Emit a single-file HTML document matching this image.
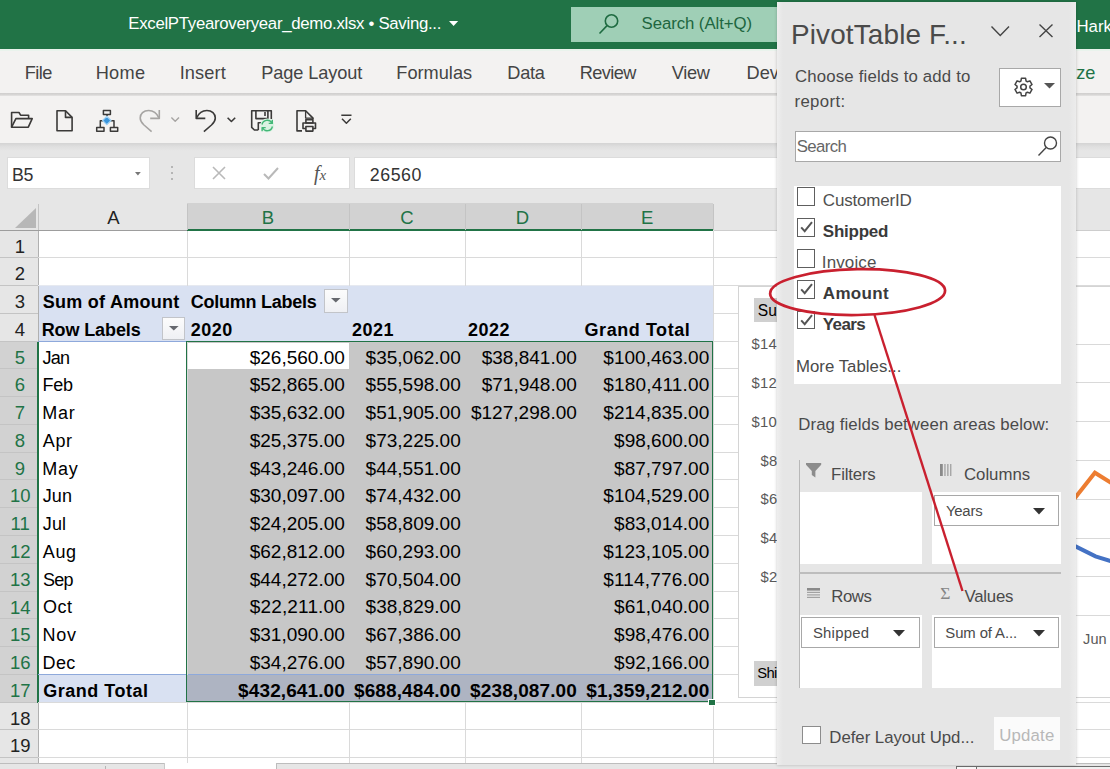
<!DOCTYPE html>
<html><head><meta charset="utf-8"><title>Excel PivotTable</title>
<style>
html,body{margin:0;padding:0;}
body{width:1110px;height:769px;position:relative;overflow:hidden;background:#e6e6e6;font-family:"Liberation Sans",sans-serif;color:#444;}
.a{position:absolute;white-space:nowrap;}
.t{position:absolute;white-space:nowrap;line-height:1;transform-origin:0 50%;}
.dd{position:absolute;border:1.3px solid #a8a8a8;background:#fff;box-sizing:border-box;}
svg{position:absolute;overflow:visible;}
</style></head><body>

<div class="a" style="left:0;top:0;width:1110px;height:49px;background:#217346;"></div>
<div class="t" id="title" style="left:128.30px;top:16px;font-size:16.8px;color:#fff;letter-spacing:-0.295px;">ExcelPTyearoveryear_demo.xlsx • Saving...</div>
<svg style="left:449.300px;top:21px" width="9.200" height="5"><path d="M0 0H9.200L4.600 5Z" fill="#fff"/></svg>
<div class="a" style="left:571px;top:7px;width:260px;height:34.5px;background:#9fcfb6;"></div>
<svg style="left:597px;top:12px" width="24" height="24" viewBox="0 0 24 24" fill="none" stroke="#1e6b41" stroke-width="1.6"><circle cx="14.5" cy="9" r="6.2"/><path d="M10 13.6L2.5 21.5"/></svg>
<div class="t" id="srch" style="left:641.50px;top:16px;font-size:16.8px;color:#20663f;letter-spacing:-0.066px;">Search (Alt+Q)</div>
<div class="t" id="hark" style="left:1076.50px;top:19px;font-size:16.8px;color:#fff;">Hark</div>
<div class="a" style="left:0;top:49px;width:1110px;height:44px;background:#f3f2f1;"></div>
<div class="a" style="left:0;top:49px;width:1110px;height:2px;background:#e9f3ec;"></div>
<div class="t" id="tab0" style="left:24.70px;top:64px;font-size:18.2px;color:#444;letter-spacing:-0.530px;">File</div>
<div class="t" id="tab1" style="left:95.70px;top:64px;font-size:18.2px;color:#444;letter-spacing:0.300px;">Home</div>
<div class="t" id="tab2" style="left:179.70px;top:64px;font-size:18.2px;color:#444;letter-spacing:0.113px;">Insert</div>
<div class="t" id="tab3" style="left:261.30px;top:64px;font-size:18.2px;color:#444;letter-spacing:-0.108px;">Page Layout</div>
<div class="t" id="tab4" style="left:396.30px;top:64px;font-size:18.2px;color:#444;letter-spacing:-0.000px;">Formulas</div>
<div class="t" id="tab5" style="left:507.30px;top:64px;font-size:18.2px;color:#444;letter-spacing:-0.301px;">Data</div>
<div class="t" id="tab6" style="left:579.70px;top:64px;font-size:18.2px;color:#444;letter-spacing:-0.580px;">Review</div>
<div class="t" id="tab7" style="left:671.70px;top:64px;font-size:18.2px;color:#444;letter-spacing:-0.319px;">View</div>
<div class="t" id="tab8" style="left:746.50px;top:64px;font-size:18.2px;color:#444;">Developer</div>
<div class="t" id="ze" style="left:-1.00px;top:64px;font-size:18.2px;color:#217346;left:auto;right:14.6px;">PivotTable Analyze</div>
<div class="a" style="left:0;top:92.6px;width:1110px;height:3.2px;background:linear-gradient(#cfcecd,#d9d8d7 70%,#e8e7e6);"></div>
<div class="a" style="left:0;top:95.6px;width:1110px;height:47px;background:#f3f2f1;"></div>
<div class="a" style="left:0;top:142.600px;width:1110px;height:8px;background:linear-gradient(#d3d3d3,#dfdfdf 45%,#e6e6e6);"></div>
<svg style="left:0;top:0" width="400" height="145" fill="none" stroke="#3b3a39" stroke-width="1.6" stroke-linejoin="round">
<path d="M11.6 127.2V112.5H19L20.6 115.2H28.6V118.5"/><path d="M11.6 127.2L15.9 118.6H32.2L28.3 127.2Z"/>
<path d="M57 110.8H65.5L72.1 117.4V130.8H57Z"/><path d="M65.5 110.8V117.4H72.1"/>
<g stroke-width="1.5"><rect x="103.4" y="110.6" width="7" height="3.8"/><rect x="96.7" y="127.4" width="7.3" height="3.8"/><rect x="110.4" y="127.4" width="7.3" height="3.8"/><path d="M100.3 127.4V120.8H114V127.4"/><path d="M107 114.4V116"/></g>
<path d="M106.8 116.3L111 120.5L106.8 124.7L102.600 120.5Z" fill="#3a96dd" stroke="#9fd0f3" stroke-width="1.2"/>
<g stroke="#a6a4a2" stroke-width="1.6"><path d="M159.3 110V118.4H150.2"/><path d="M158.8 117.8C157 113.600 153 110.5 148.6 110.5C143.600 110.5 140.2 113.800 140.2 118C140.2 121 141.8 123 144 125L151.6 131.6"/><path d="M171.4 117.5L175.2 121.2L179 117.5" stroke-width="1.4"/></g>
<path d="M196.2 110V118.4H205.3"/><path d="M196.7 117.8C198.5 113.600 202.5 110.5 206.9 110.5C211.9 110.5 215.3 113.800 215.3 118C215.3 121 213.7 123 211.5 125L203.9 131.6"/><path d="M227.6 117.7L231.4 121.5L235.2 117.700" stroke-width="1.6"/>
<path d="M258.3 130H254.4L251.7 127.4V110.7H271.3V119"/><path d="M255.9 110.7V118.6H267.900V110.7M265 112V116"/><path d="M258.3 130V122.8H261.5"/>
<circle cx="267.2" cy="125.5" r="7" fill="#d9f2e2" stroke="none"/>
<g stroke="#43b777" stroke-width="1.4"><path d="M262 124.500A5.300 5.300 0 0 1 271.8 123M272.3 119.800V123.400H268.700"/><path d="M272.4 126.500A5.300 5.300 0 0 1 262.600 128M262.100 131.200V127.600H265.700"/></g>
<path d="M302 130.900H297V110.700H305.6L313 118.100V119"/><path d="M305.6 110.700V118.100H313" stroke-width="1.3"/><rect x="305.900" y="119.600" width="7" height="3.400"/><rect x="303" y="123" width="12.500" height="5.500"/><rect x="305.900" y="126.500" width="7" height="4.600" fill="#f3f2f1"/>
<path d="M341.300 115.200H351.500M342 118.800L346.400 123.200L350.800 118.800" stroke-width="1.500"/>
</svg>
<div class="a" style="left:7px;top:157px;width:143px;height:32px;background:#fff;border:1px solid #dcdcdc;box-sizing:border-box;"></div>
<div class="t" id="b5" style="left:12.00px;top:167px;font-size:17.8px;color:#333;letter-spacing:-0.260px;">B5</div>
<svg style="left:134.600px;top:172.300px" width="5.800" height="3.400"><path d="M0 0H5.800L2.900 3.400Z" fill="#777"/></svg>
<div class="a" style="left:171px;top:166px;width:2px;height:2px;background:#b5b5b5;"></div>
<div class="a" style="left:171px;top:172px;width:2px;height:2px;background:#b5b5b5;"></div>
<div class="a" style="left:171px;top:178px;width:2px;height:2px;background:#b5b5b5;"></div>
<div class="a" style="left:194px;top:157px;width:155.500px;height:32px;background:#fff;border:1px solid #dcdcdc;box-sizing:border-box;"></div>
<svg style="left:212px;top:166px" width="14" height="14" fill="none" stroke="#b9b9b9" stroke-width="1.6"><path d="M1 1L13 13M13 1L1 13"/></svg>
<svg style="left:263px;top:167px" width="16" height="13" fill="none" stroke="#b9b9b9" stroke-width="2"><path d="M1 7L5.500 11.500L15 1"/></svg>
<div class="t" style="left:314px;top:163px;font-size:20px;color:#555;font-family:'Liberation Serif',serif;font-style:italic;">f<span style="font-size:15px">x</span></div>
<div class="a" style="left:354px;top:157px;width:760px;height:32px;background:#fff;border:1px solid #dcdcdc;box-sizing:border-box;"></div>
<div class="t" id="fval" style="left:369.70px;top:167px;font-size:17.8px;color:#333;letter-spacing:0.586px;">26560</div>
<div class="a" style="left:38px;top:230px;width:1072px;height:533px;background:#fff;"></div>
<div class="a" style="left:0;top:203px;width:1110px;height:27.500px;background:#e6e6e6;"></div>
<div class="a" style="left:186.5px;top:203px;width:526.5px;height:27px;background:#d2d2d2;border-bottom:2px solid #217346;box-sizing:content-box;height:26px;"></div>
<div class="a" style="left:0;top:230px;width:186.500px;height:1px;background:#9d9d9d;"></div>
<div class="a" style="left:713.5px;top:230px;width:400px;height:1px;background:#cdcdcd;"></div>
<svg style="left:15px;top:208px" width="21" height="20"><path d="M21 0V20H0Z" fill="#b7b7b7"/></svg>
<div class="a" style="left:38px;top:204px;width:1px;height:26px;background:#c4c4c4;"></div>
<div class="a" style="left:186.5px;top:204px;width:1px;height:26px;background:#c4c4c4;"></div>
<div class="a" style="left:348.5px;top:204px;width:1px;height:26px;background:#c4c4c4;"></div>
<div class="a" style="left:464.5px;top:204px;width:1px;height:26px;background:#c4c4c4;"></div>
<div class="a" style="left:580.5px;top:204px;width:1px;height:26px;background:#c4c4c4;"></div>
<div class="a" style="left:713px;top:204px;width:1px;height:26px;background:#c4c4c4;"></div>
<div class="t" id="chA" style="left:93.35px;width:40.0px;text-align:center;top:209px;font-size:18.5px;color:#222;">A</div>
<div class="t" id="chB" style="left:248px;width:40px;text-align:center;top:209px;font-size:18.5px;color:#217346;">B</div>
<div class="t" id="chC" style="left:386.95px;width:40.0px;text-align:center;top:209px;font-size:18.5px;color:#217346;">C</div>
<div class="t" id="chD" style="left:502.35px;width:40.0px;text-align:center;top:209px;font-size:18.5px;color:#217346;">D</div>
<div class="t" id="chE" style="left:627.15px;width:40.0px;text-align:center;top:209px;font-size:18.5px;color:#217346;">E</div>
<div class="a" style="left:0;top:230.60px;width:38px;height:27.77px;background:#e6e6e6;"></div>
<div class="a" style="left:0;top:257.37px;width:38px;height:1px;background:#c4c4c4;"></div>
<div class="t" id="rh1" style="left:0px;width:39.6px;text-align:center;top:238px;font-size:18.5px;color:#222;">1</div>
<div class="a" style="left:0;top:258.37px;width:38px;height:27.77px;background:#e6e6e6;"></div>
<div class="a" style="left:0;top:285.13px;width:38px;height:1px;background:#c4c4c4;"></div>
<div class="t" id="rh2" style="left:0px;width:39.6px;text-align:center;top:265px;font-size:18.5px;color:#222;">2</div>
<div class="a" style="left:0;top:286.13px;width:38px;height:27.77px;background:#e6e6e6;"></div>
<div class="a" style="left:0;top:312.89px;width:38px;height:1px;background:#c4c4c4;"></div>
<div class="t" id="rh3" style="left:0px;width:39.6px;text-align:center;top:293px;font-size:18.5px;color:#222;">3</div>
<div class="a" style="left:0;top:313.89px;width:38px;height:27.77px;background:#e6e6e6;"></div>
<div class="a" style="left:0;top:340.66px;width:38px;height:1px;background:#c4c4c4;"></div>
<div class="t" id="rh4" style="left:0px;width:39.6px;text-align:center;top:321px;font-size:18.5px;color:#222;">4</div>
<div class="a" style="left:0;top:341.66px;width:38px;height:27.77px;background:#d2d2d2;"></div>
<div class="a" style="left:0;top:368.42px;width:38px;height:1px;background:#c4c4c4;"></div>
<div class="t" id="rh5" style="left:0px;width:39.6px;text-align:center;top:349px;font-size:18.5px;color:#217346;">5</div>
<div class="a" style="left:0;top:369.42px;width:38px;height:27.77px;background:#d2d2d2;"></div>
<div class="a" style="left:0;top:396.19px;width:38px;height:1px;background:#c4c4c4;"></div>
<div class="t" id="rh6" style="left:0px;width:39.6px;text-align:center;top:376px;font-size:18.5px;color:#217346;">6</div>
<div class="a" style="left:0;top:397.19px;width:38px;height:27.77px;background:#d2d2d2;"></div>
<div class="a" style="left:0;top:423.95px;width:38px;height:1px;background:#c4c4c4;"></div>
<div class="t" id="rh7" style="left:0px;width:39.6px;text-align:center;top:404px;font-size:18.5px;color:#217346;">7</div>
<div class="a" style="left:0;top:424.96px;width:38px;height:27.77px;background:#d2d2d2;"></div>
<div class="a" style="left:0;top:451.72px;width:38px;height:1px;background:#c4c4c4;"></div>
<div class="t" id="rh8" style="left:0px;width:39.6px;text-align:center;top:432px;font-size:18.5px;color:#217346;">8</div>
<div class="a" style="left:0;top:452.72px;width:38px;height:27.77px;background:#d2d2d2;"></div>
<div class="a" style="left:0;top:479.49px;width:38px;height:1px;background:#c4c4c4;"></div>
<div class="t" id="rh9" style="left:0px;width:39.6px;text-align:center;top:460px;font-size:18.5px;color:#217346;">9</div>
<div class="a" style="left:0;top:480.49px;width:38px;height:27.77px;background:#d2d2d2;"></div>
<div class="a" style="left:0;top:507.25px;width:38px;height:1px;background:#c4c4c4;"></div>
<div class="t" id="rh10" style="left:0px;width:40.4px;text-align:center;top:487px;font-size:18.5px;color:#217346;">10</div>
<div class="a" style="left:0;top:508.25px;width:38px;height:27.77px;background:#d2d2d2;"></div>
<div class="a" style="left:0;top:535.01px;width:38px;height:1px;background:#c4c4c4;"></div>
<div class="t" id="rh11" style="left:0px;width:40.4px;text-align:center;top:515px;font-size:18.5px;color:#217346;">11</div>
<div class="a" style="left:0;top:536.01px;width:38px;height:27.77px;background:#d2d2d2;"></div>
<div class="a" style="left:0;top:562.78px;width:38px;height:1px;background:#c4c4c4;"></div>
<div class="t" id="rh12" style="left:0px;width:40.4px;text-align:center;top:543px;font-size:18.5px;color:#217346;">12</div>
<div class="a" style="left:0;top:563.78px;width:38px;height:27.77px;background:#d2d2d2;"></div>
<div class="a" style="left:0;top:590.54px;width:38px;height:1px;background:#c4c4c4;"></div>
<div class="t" id="rh13" style="left:0px;width:40.4px;text-align:center;top:571px;font-size:18.5px;color:#217346;">13</div>
<div class="a" style="left:0;top:591.54px;width:38px;height:27.77px;background:#d2d2d2;"></div>
<div class="a" style="left:0;top:618.31px;width:38px;height:1px;background:#c4c4c4;"></div>
<div class="t" id="rh14" style="left:0px;width:40.4px;text-align:center;top:599px;font-size:18.5px;color:#217346;">14</div>
<div class="a" style="left:0;top:619.31px;width:38px;height:27.77px;background:#d2d2d2;"></div>
<div class="a" style="left:0;top:646.08px;width:38px;height:1px;background:#c4c4c4;"></div>
<div class="t" id="rh15" style="left:0px;width:40.4px;text-align:center;top:626px;font-size:18.5px;color:#217346;">15</div>
<div class="a" style="left:0;top:647.08px;width:38px;height:27.77px;background:#d2d2d2;"></div>
<div class="a" style="left:0;top:673.84px;width:38px;height:1px;background:#c4c4c4;"></div>
<div class="t" id="rh16" style="left:0px;width:40.4px;text-align:center;top:654px;font-size:18.5px;color:#217346;">16</div>
<div class="a" style="left:0;top:674.84px;width:38px;height:27.77px;background:#d2d2d2;"></div>
<div class="a" style="left:0;top:701.61px;width:38px;height:1px;background:#c4c4c4;"></div>
<div class="t" id="rh17" style="left:0px;width:40.4px;text-align:center;top:682px;font-size:18.5px;color:#217346;">17</div>
<div class="a" style="left:0;top:702.61px;width:38px;height:27.77px;background:#e6e6e6;"></div>
<div class="a" style="left:0;top:729.37px;width:38px;height:1px;background:#c4c4c4;"></div>
<div class="t" id="rh18" style="left:0px;width:40.4px;text-align:center;top:710px;font-size:18.5px;color:#222;">18</div>
<div class="a" style="left:0;top:730.37px;width:38px;height:27.77px;background:#e6e6e6;"></div>
<div class="a" style="left:0;top:757.13px;width:38px;height:1px;background:#c4c4c4;"></div>
<div class="t" id="rh19" style="left:0px;width:40.4px;text-align:center;top:737px;font-size:18.5px;color:#222;">19</div>
<div class="a" style="left:0;top:758.13px;width:38px;height:5px;background:#e6e6e6;"></div>
<div class="a" style="left:37.500px;top:231px;width:1px;height:532px;background:#b0b0b0;"></div>
<div class="a" style="left:37px;top:341.66px;width:2px;height:360.94px;background:#217346;"></div>
<div class="a" style="left:38.500px;top:286.13px;width:674.5px;height:55.53px;background:#d9e1f2;"></div>
<div class="a" style="left:38.500px;top:674.84px;width:148.0px;height:27.77px;background:#d9e1f2;"></div>
<div class="a" style="left:186.5px;top:341.66px;width:526.5px;height:333.18px;background:#c7c7c7;"></div>
<div class="a" style="left:186.5px;top:674.84px;width:526.5px;height:27.77px;background:#aeb4c2;"></div>
<div class="a" style="left:187.5px;top:342.66px;width:161.0px;height:26.77px;background:#fff;"></div>
<div class="a" style="left:38px;top:257.37px;width:1072px;height:1px;background:#dadada;"></div>
<div class="a" style="left:38px;top:285.13px;width:675px;height:1px;background:#e6e9f0;"></div>
<div class="a" style="left:713px;top:285.13px;width:397px;height:1px;background:#dadada;"></div>
<div class="a" style="left:713px;top:312.89px;width:397px;height:1px;background:#dadada;"></div>
<div class="a" style="left:38px;top:340.66px;width:148px;height:1px;background:#8ea9db;"></div>
<div class="a" style="left:713px;top:340.66px;width:397px;height:1px;background:#dadada;"></div>
<div class="a" style="left:713px;top:368.42px;width:397px;height:1px;background:#dadada;"></div>
<div class="a" style="left:713px;top:396.19px;width:397px;height:1px;background:#dadada;"></div>
<div class="a" style="left:713px;top:423.96px;width:397px;height:1px;background:#dadada;"></div>
<div class="a" style="left:713px;top:451.72px;width:397px;height:1px;background:#dadada;"></div>
<div class="a" style="left:713px;top:479.49px;width:397px;height:1px;background:#dadada;"></div>
<div class="a" style="left:713px;top:507.25px;width:397px;height:1px;background:#dadada;"></div>
<div class="a" style="left:713px;top:535.01px;width:397px;height:1px;background:#dadada;"></div>
<div class="a" style="left:713px;top:562.78px;width:397px;height:1px;background:#dadada;"></div>
<div class="a" style="left:713px;top:590.54px;width:397px;height:1px;background:#dadada;"></div>
<div class="a" style="left:713px;top:618.31px;width:397px;height:1px;background:#dadada;"></div>
<div class="a" style="left:713px;top:646.08px;width:397px;height:1px;background:#dadada;"></div>
<div class="a" style="left:38px;top:673.84px;width:675px;height:1px;background:#8ea9db;"></div>
<div class="a" style="left:713px;top:673.84px;width:397px;height:1px;background:#dadada;"></div>
<div class="a" style="left:38px;top:701.61px;width:1072px;height:1px;background:#dadada;"></div>
<div class="a" style="left:38px;top:729.37px;width:1072px;height:1px;background:#dadada;"></div>
<div class="a" style="left:38px;top:757.13px;width:1072px;height:1px;background:#dadada;"></div>
<div class="a" style="left:186.5px;top:231.00px;width:1px;height:55.13px;background:#dadada;"></div>
<div class="a" style="left:186.5px;top:702.61px;width:1px;height:60.39px;background:#dadada;"></div>
<div class="a" style="left:186.5px;top:341.66px;width:1px;height:333.18px;background:#dadada;"></div>
<div class="a" style="left:348.5px;top:231.00px;width:1px;height:55.13px;background:#dadada;"></div>
<div class="a" style="left:348.5px;top:702.61px;width:1px;height:60.39px;background:#dadada;"></div>
<div class="a" style="left:464.5px;top:231.00px;width:1px;height:55.13px;background:#dadada;"></div>
<div class="a" style="left:464.5px;top:702.61px;width:1px;height:60.39px;background:#dadada;"></div>
<div class="a" style="left:580.5px;top:231.00px;width:1px;height:55.13px;background:#dadada;"></div>
<div class="a" style="left:580.5px;top:702.61px;width:1px;height:60.39px;background:#dadada;"></div>
<div class="a" style="left:713px;top:231.00px;width:1px;height:55.13px;background:#dadada;"></div>
<div class="a" style="left:713px;top:702.61px;width:1px;height:60.39px;background:#dadada;"></div>
<div class="a" style="left:713px;top:231.00px;width:1px;height:532.00px;background:#dadada;"></div>
<div class="a" style="left:186.0px;top:340.66px;width:526.5px;height:360.94px;border:1.500px solid #217346;box-sizing:border-box;"></div>
<div class="a" style="left:708.2px;top:698.8px;width:5.6px;height:5.2px;background:#217346;border:1px solid #fff;"></div>
<div class="t" id="c1" style="left:42.70px;top:293px;font-size:18.0px;color:#000;font-weight:bold;letter-spacing:0.276px;">Sum of Amount</div>
<div class="t" id="c2" style="left:190.70px;top:293px;font-size:18.0px;color:#000;font-weight:bold;letter-spacing:-0.250px;">Column Labels</div>
<div class="t" id="c3" style="left:41.70px;top:321px;font-size:18.0px;color:#000;font-weight:bold;letter-spacing:-0.112px;">Row Labels</div>
<div class="t" id="c4" style="left:190.70px;top:321px;font-size:18.0px;color:#000;font-weight:bold;letter-spacing:0.523px;">2020</div>
<div class="t" id="c5" style="left:351.90px;top:321px;font-size:18.0px;color:#000;font-weight:bold;letter-spacing:0.523px;">2021</div>
<div class="t" id="c6" style="left:468.00px;top:321px;font-size:18.0px;color:#000;font-weight:bold;letter-spacing:0.523px;">2022</div>
<div class="t" id="c7" style="left:584.50px;top:321px;font-size:18.0px;color:#000;font-weight:bold;letter-spacing:0.563px;">Grand Total</div>
<div class="t" id="c8" style="left:42.40px;top:349px;font-size:18.0px;color:#000;letter-spacing:-0.700px;">Jan</div>
<div class="t" id="c9" style="left:249.70px;top:348px;font-size:19.0px;color:#000;letter-spacing:0.008px;">$26,560.00</div>
<div class="t" id="c10" style="left:365.60px;top:348px;font-size:19.0px;color:#000;letter-spacing:0.008px;">$35,062.00</div>
<div class="t" id="c11" style="left:481.70px;top:348px;font-size:19.0px;color:#000;letter-spacing:0.008px;">$38,841.00</div>
<div class="t" id="c12" style="left:603.30px;top:348px;font-size:19.0px;color:#000;letter-spacing:0.031px;">$100,463.00</div>
<div class="t" id="c13" style="left:42.60px;top:376px;font-size:18.0px;color:#000;letter-spacing:-0.253px;">Feb</div>
<div class="t" id="c14" style="left:249.70px;top:375px;font-size:19.0px;color:#000;letter-spacing:0.008px;">$52,865.00</div>
<div class="t" id="c15" style="left:365.60px;top:375px;font-size:19.0px;color:#000;letter-spacing:0.008px;">$55,598.00</div>
<div class="t" id="c16" style="left:481.70px;top:375px;font-size:19.0px;color:#000;letter-spacing:0.008px;">$71,948.00</div>
<div class="t" id="c17" style="left:603.30px;top:375px;font-size:19.0px;color:#000;letter-spacing:0.172px;">$180,411.00</div>
<div class="t" id="c18" style="left:42.30px;top:404px;font-size:18.0px;color:#000;letter-spacing:0.700px;">Mar</div>
<div class="t" id="c19" style="left:249.70px;top:403px;font-size:19.0px;color:#000;letter-spacing:0.008px;">$35,632.00</div>
<div class="t" id="c20" style="left:365.60px;top:403px;font-size:19.0px;color:#000;letter-spacing:0.008px;">$51,905.00</div>
<div class="t" id="c21" style="left:470.90px;top:403px;font-size:19.0px;color:#000;letter-spacing:0.031px;">$127,298.00</div>
<div class="t" id="c22" style="left:603.30px;top:403px;font-size:19.0px;color:#000;letter-spacing:0.031px;">$214,835.00</div>
<div class="t" id="c23" style="left:42.70px;top:432px;font-size:18.0px;color:#000;letter-spacing:0.700px;">Apr</div>
<div class="t" id="c24" style="left:249.70px;top:431px;font-size:19.0px;color:#000;letter-spacing:0.008px;">$25,375.00</div>
<div class="t" id="c25" style="left:365.60px;top:431px;font-size:19.0px;color:#000;letter-spacing:0.008px;">$73,225.00</div>
<div class="t" id="c26" style="left:614.10px;top:431px;font-size:19.0px;color:#000;letter-spacing:0.008px;">$98,600.00</div>
<div class="t" id="c27" style="left:42.30px;top:460px;font-size:18.0px;color:#000;letter-spacing:0.700px;">May</div>
<div class="t" id="c28" style="left:249.70px;top:459px;font-size:19.0px;color:#000;letter-spacing:0.008px;">$43,246.00</div>
<div class="t" id="c29" style="left:365.60px;top:459px;font-size:19.0px;color:#000;letter-spacing:0.008px;">$44,551.00</div>
<div class="t" id="c30" style="left:614.10px;top:459px;font-size:19.0px;color:#000;letter-spacing:0.008px;">$87,797.00</div>
<div class="t" id="c31" style="left:42.70px;top:487px;font-size:18.0px;color:#000;letter-spacing:0.095px;">Jun</div>
<div class="t" id="c32" style="left:249.70px;top:486px;font-size:19.0px;color:#000;letter-spacing:0.008px;">$30,097.00</div>
<div class="t" id="c33" style="left:365.60px;top:486px;font-size:19.0px;color:#000;letter-spacing:0.008px;">$74,432.00</div>
<div class="t" id="c34" style="left:603.30px;top:486px;font-size:19.0px;color:#000;letter-spacing:0.031px;">$104,529.00</div>
<div class="t" id="c35" style="left:42.70px;top:515px;font-size:18.0px;color:#000;letter-spacing:0.195px;">Jul</div>
<div class="t" id="c36" style="left:249.70px;top:514px;font-size:19.0px;color:#000;letter-spacing:0.008px;">$24,205.00</div>
<div class="t" id="c37" style="left:365.60px;top:514px;font-size:19.0px;color:#000;letter-spacing:0.008px;">$58,809.00</div>
<div class="t" id="c38" style="left:614.10px;top:514px;font-size:19.0px;color:#000;letter-spacing:0.008px;">$83,014.00</div>
<div class="t" id="c39" style="left:42.70px;top:543px;font-size:18.0px;color:#000;letter-spacing:0.700px;">Aug</div>
<div class="t" id="c40" style="left:249.70px;top:542px;font-size:19.0px;color:#000;letter-spacing:0.008px;">$62,812.00</div>
<div class="t" id="c41" style="left:365.60px;top:542px;font-size:19.0px;color:#000;letter-spacing:0.008px;">$60,293.00</div>
<div class="t" id="c42" style="left:603.30px;top:542px;font-size:19.0px;color:#000;letter-spacing:0.031px;">$123,105.00</div>
<div class="t" id="c43" style="left:43.00px;top:571px;font-size:18.0px;color:#000;letter-spacing:-0.700px;">Sep</div>
<div class="t" id="c44" style="left:249.70px;top:570px;font-size:19.0px;color:#000;letter-spacing:0.008px;">$44,272.00</div>
<div class="t" id="c45" style="left:365.60px;top:570px;font-size:19.0px;color:#000;letter-spacing:0.008px;">$70,504.00</div>
<div class="t" id="c46" style="left:603.30px;top:570px;font-size:19.0px;color:#000;letter-spacing:0.172px;">$114,776.00</div>
<div class="t" id="c47" style="left:42.90px;top:598px;font-size:18.0px;color:#000;letter-spacing:0.500px;">Oct</div>
<div class="t" id="c48" style="left:249.70px;top:597px;font-size:19.0px;color:#000;letter-spacing:0.165px;">$22,211.00</div>
<div class="t" id="c49" style="left:365.60px;top:597px;font-size:19.0px;color:#000;letter-spacing:0.008px;">$38,829.00</div>
<div class="t" id="c50" style="left:614.10px;top:597px;font-size:19.0px;color:#000;letter-spacing:0.008px;">$61,040.00</div>
<div class="t" id="c51" style="left:42.60px;top:626px;font-size:18.0px;color:#000;letter-spacing:0.700px;">Nov</div>
<div class="t" id="c52" style="left:249.70px;top:625px;font-size:19.0px;color:#000;letter-spacing:0.008px;">$31,090.00</div>
<div class="t" id="c53" style="left:365.60px;top:625px;font-size:19.0px;color:#000;letter-spacing:0.008px;">$67,386.00</div>
<div class="t" id="c54" style="left:614.10px;top:625px;font-size:19.0px;color:#000;letter-spacing:0.008px;">$98,476.00</div>
<div class="t" id="c55" style="left:42.60px;top:654px;font-size:18.0px;color:#000;letter-spacing:0.295px;">Dec</div>
<div class="t" id="c56" style="left:249.70px;top:653px;font-size:19.0px;color:#000;letter-spacing:0.008px;">$34,276.00</div>
<div class="t" id="c57" style="left:365.60px;top:653px;font-size:19.0px;color:#000;letter-spacing:0.008px;">$57,890.00</div>
<div class="t" id="c58" style="left:614.10px;top:653px;font-size:19.0px;color:#000;letter-spacing:0.008px;">$92,166.00</div>
<div class="t" id="c59" style="left:43.20px;top:682px;font-size:18.0px;color:#000;font-weight:bold;letter-spacing:0.513px;">Grand Total</div>
<div class="t" id="c60" style="left:238.10px;top:681px;font-size:19.0px;color:#000;font-weight:bold;letter-spacing:0.111px;">$432,641.00</div>
<div class="t" id="c61" style="left:354.00px;top:681px;font-size:19.0px;color:#000;font-weight:bold;letter-spacing:0.111px;">$688,484.00</div>
<div class="t" id="c62" style="left:470.10px;top:681px;font-size:19.0px;color:#000;font-weight:bold;letter-spacing:0.111px;">$238,087.00</div>
<div class="t" id="c63" style="left:586.20px;top:681px;font-size:19.0px;color:#000;font-weight:bold;letter-spacing:0.130px;">$1,359,212.00</div>
<div class="a" style="left:324.3px;top:289.03px;width:23.3px;height:23.6px;box-sizing:border-box;border:1px solid #c2c4c9;background:linear-gradient(#fcfcfc,#eff0f4);"></div>
<svg style="left:331.3px;top:298.43px" width="9.600" height="4.600"><path d="M0 0H9.600L4.800 4.600Z" fill="#66686e"/></svg>
<div class="a" style="left:162px;top:316.79px;width:23.3px;height:23.6px;box-sizing:border-box;border:1px solid #c2c4c9;background:linear-gradient(#fcfcfc,#eff0f4);"></div>
<svg style="left:169px;top:326.19px" width="9.600" height="4.600"><path d="M0 0H9.600L4.800 4.600Z" fill="#66686e"/></svg>
<div class="a" style="left:0;top:763.5px;width:1110px;height:6px;background:#e6e6e6;"></div>
<div class="a" style="left:0;top:763px;width:164.3px;height:1px;background:#bdbdbd;"></div>
<div class="a" style="left:164.3px;top:763px;width:112px;height:6px;background:#fff;"></div>
<div class="a" style="left:276.2px;top:763px;width:834px;height:1px;background:#bdbdbd;"></div>
<div class="a" style="left:276.2px;top:763px;width:1px;height:6px;background:#bdbdbd;"></div>
<div class="a" style="left:164.3px;top:763px;width:1px;height:6px;background:#c9c9c9;"></div>
<div class="a" style="left:104.5px;top:765.5px;width:1px;height:4px;background:#b5b5b5;"></div>
<div class="a" style="left:955.5px;top:765.5px;width:21px;height:5px;background:#f8f8f8;border:1.3px solid #6e6e6e;border-bottom:none;box-sizing:border-box;"></div>
<div class="a" style="left:977px;top:766px;width:133px;height:3px;background:#f0f0f0;border-top:1.3px solid #6e6e6e;box-sizing:border-box;"></div>
<div class="a" style="left:738px;top:285.6px;width:380px;height:412.4px;background:#fff;border:1px solid #d4d4d4;box-sizing:border-box;"></div>
<div class="a" style="left:754.2px;top:298.1px;width:60px;height:24px;background:#d0d0d0;"></div>
<div class="t" id="cht1" style="left:757.80px;top:303px;font-size:15.6px;color:#000;">Sum of Amount</div>
<div class="t" id="ax0" style="left:751.60px;top:337px;font-size:14.8px;color:#595959;letter-spacing:0.216px;">$140,000</div>
<div class="t" id="ax1" style="left:751.60px;top:376px;font-size:14.8px;color:#595959;letter-spacing:0.216px;">$120,000</div>
<div class="t" id="ax2" style="left:751.60px;top:415px;font-size:14.8px;color:#595959;letter-spacing:0.216px;">$100,000</div>
<div class="t" id="ax3" style="left:760.60px;top:454px;font-size:14.8px;color:#595959;letter-spacing:0.190px;">$80,000</div>
<div class="t" id="ax4" style="left:760.60px;top:492px;font-size:14.8px;color:#595959;letter-spacing:0.190px;">$60,000</div>
<div class="t" id="ax5" style="left:760.60px;top:531px;font-size:14.8px;color:#595959;letter-spacing:0.190px;">$40,000</div>
<div class="t" id="ax6" style="left:760.60px;top:570px;font-size:14.8px;color:#595959;letter-spacing:0.190px;">$20,000</div>
<div class="a" style="left:754.2px;top:661px;width:60px;height:24.5px;background:#d0d0d0;"></div>
<div class="t" id="cht2" style="left:757.30px;top:666px;font-size:14.8px;color:#000;letter-spacing:-0.700px;">Shipped</div>
<div class="a" style="left:1075px;top:343.70px;width:40px;height:1px;background:#d9d9d9;"></div>
<div class="a" style="left:1075px;top:382.46px;width:40px;height:1px;background:#d9d9d9;"></div>
<div class="a" style="left:1075px;top:421.22px;width:40px;height:1px;background:#d9d9d9;"></div>
<div class="a" style="left:1075px;top:459.98px;width:40px;height:1px;background:#d9d9d9;"></div>
<div class="a" style="left:1075px;top:498.74px;width:40px;height:1px;background:#d9d9d9;"></div>
<div class="a" style="left:1075px;top:537.50px;width:40px;height:1px;background:#d9d9d9;"></div>
<div class="a" style="left:1075px;top:576.26px;width:40px;height:1px;background:#d9d9d9;"></div>
<div class="a" style="left:1075px;top:615.02px;width:40px;height:1px;background:#d9d9d9;"></div>
<svg style="left:0;top:0" width="1110" height="769" fill="none" stroke-width="4" stroke-linejoin="miter"><path d="M1070 504.3L1094.9 472.7L1112 483.5" stroke="#ed7d31"/><path d="M1070 543.6L1095.5 556.4L1112 561.4" stroke="#4472c4"/></svg>
<div class="t" id="jun" style="left:1083.00px;top:632px;font-size:14.5px;color:#595959;letter-spacing:0.143px;">Jun</div>
<div class="a" style="left:776.5px;top:1.5px;width:299px;height:763px;background:linear-gradient(90deg,#eeeeee 0,#e6e6e6 6px,#e6e6e6 292px,#ececec 299px);box-sizing:border-box;box-shadow:0 0 3px rgba(0,0,0,0.22);"></div>
<div class="t" id="ptitle" style="left:791.00px;top:21px;font-size:27.9px;color:#4a4a4a;letter-spacing:0.152px;">PivotTable F...</div>
<svg style="left:991px;top:26px" width="18.5" height="10.5" viewBox="0 0 18.5 10.5" fill="none" stroke="#444" stroke-width="1.4"><path d="M0.5 0.5L9.25 9.5L18 0.5"/></svg>
<svg style="left:1039px;top:24px" width="14" height="13.4" viewBox="0 0 14 13.4" fill="none" stroke="#444" stroke-width="1.4"><path d="M0.5 0.5L13.5 12.9M13.5 0.5L0.5 12.9"/></svg>
<div class="t" id="choose1" style="left:795.00px;top:69px;font-size:16.8px;color:#4a4a4a;letter-spacing:0.167px;">Choose fields to add to</div>
<div class="t" id="choose2" style="left:794.50px;top:94px;font-size:16.8px;color:#4a4a4a;letter-spacing:0.344px;">report:</div>
<div class="dd" style="left:999px;top:67.5px;width:61.5px;height:39px;"></div>
<svg style="left:1013.5px;top:78px" width="19" height="18" viewBox="0 0 19 18" fill="none" stroke="#444" stroke-width="1.5" stroke-linejoin="round"><path d="M11.62 17.64 L7.38 17.64 L6.97 14.99 L5.58 14.19 L3.07 15.15 L0.96 11.49 L3.05 9.80 L3.05 8.20 L0.96 6.51 L3.07 2.85 L5.58 3.81 L6.97 3.01 L7.38 0.36 L11.62 0.36 L12.03 3.01 L13.42 3.81 L15.93 2.85 L18.04 6.51 L15.95 8.20 L15.95 9.80 L18.04 11.49 L15.93 15.15 L13.42 14.19 L12.03 14.99Z"/><circle cx="9.5" cy="9" r="2.800"/></svg>
<svg style="left:1044px;top:83.3px" width="11" height="5.6"><path d="M0 0H11L5.5 5.6Z" fill="#555"/></svg>
<div class="dd" style="left:794.5px;top:131px;width:266px;height:31px;"></div>
<div class="t" id="psearch" style="left:796.80px;top:139px;font-size:16.8px;color:#666;letter-spacing:-0.648px;">Search</div>
<svg style="left:1037px;top:135px" width="22" height="22" viewBox="0 0 22 22" fill="none" stroke="#444" stroke-width="1.4"><circle cx="13.5" cy="8" r="6"/><path d="M9.2 12.5L1.5 20.5"/></svg>
<div class="a" style="left:794px;top:186px;width:267px;height:197.5px;background:#fff;"></div>
<div class="a" style="left:796.5px;top:187.00px;width:18.8px;height:18.7px;box-sizing:border-box;border:1.3px solid #5e5e5e;background:#fff;"></div>
<div class="t" id="fld0" style="left:822.80px;top:192px;font-size:17px;color:#505050;letter-spacing:-0.179px;">CustomerID</div>
<div class="a" style="left:796.5px;top:217.95px;width:18.8px;height:18.7px;box-sizing:border-box;border:1.3px solid #5e5e5e;background:#fff;"></div>
<svg style="left:799.5px;top:221.15px" width="13" height="12" fill="none" stroke="#555" stroke-width="2"><path d="M1.2 6.400L4.700 10.200L12 1.200"/></svg>
<div class="t" id="fld1" style="left:822.80px;top:223px;font-size:17px;color:#3a3a3a;font-weight:bold;letter-spacing:-0.245px;">Shipped</div>
<div class="a" style="left:796.5px;top:248.90px;width:18.8px;height:18.7px;box-sizing:border-box;border:1.3px solid #5e5e5e;background:#fff;"></div>
<div class="t" id="fld2" style="left:821.80px;top:254px;font-size:17px;color:#505050;letter-spacing:0.132px;">Invoice</div>
<div class="a" style="left:796.5px;top:279.85px;width:18.8px;height:18.7px;box-sizing:border-box;border:1.3px solid #5e5e5e;background:#fff;"></div>
<svg style="left:799.5px;top:283.05px" width="13" height="12" fill="none" stroke="#555" stroke-width="2"><path d="M1.2 6.400L4.700 10.200L12 1.200"/></svg>
<div class="t" id="fld3" style="left:822.80px;top:285px;font-size:17px;color:#3a3a3a;font-weight:bold;letter-spacing:0.331px;">Amount</div>
<div class="a" style="left:796.5px;top:310.80px;width:18.8px;height:18.7px;box-sizing:border-box;border:1.3px solid #5e5e5e;background:#fff;"></div>
<svg style="left:799.5px;top:314.00px" width="13" height="12" fill="none" stroke="#555" stroke-width="2"><path d="M1.2 6.400L4.700 10.200L12 1.200"/></svg>
<div class="t" id="fld4" style="left:822.80px;top:316px;font-size:17px;color:#3a3a3a;font-weight:bold;letter-spacing:-0.606px;">Years</div>
<div class="t" id="more" style="left:796.00px;top:359px;font-size:16.8px;color:#4a4a4a;letter-spacing:0.021px;">More Tables...</div>
<div class="t" id="drag" style="left:798.30px;top:417px;font-size:16.8px;color:#4a4a4a;letter-spacing:0.091px;">Drag fields between areas below:</div>
<div class="a" style="left:798.6px;top:460px;width:1.2px;height:228px;background:#b8b8b8;"></div>
<div class="a" style="left:799px;top:572.3px;width:262px;height:1.4px;background:#bdbdbd;"></div>
<svg style="left:805.6px;top:463px" width="15.2" height="14.5" viewBox="0 0 15.2 14.5"><path d="M0 0H15.2V1.8L9.4 8V14.5L5.8 12V8L0 1.8Z" fill="#8c8c8c"/></svg>
<div class="t" id="lf" style="left:831.10px;top:467px;font-size:16.8px;color:#4a4a4a;letter-spacing:-0.182px;">Filters</div>
<div class="a" style="left:800px;top:492px;width:121.6px;height:71.8px;background:#fff;"></div>
<svg style="left:940px;top:464px" width="11.5" height="12" fill="#8a8a8a"><rect x="0" y="0" width="2.8" height="12"/><rect x="4.3" y="0" width="1.3" height="12" opacity=".75"/><rect x="7.2" y="0" width="1.3" height="12" opacity=".75"/><rect x="10.1" y="0" width="1.3" height="12" opacity=".75"/></svg>
<div class="t" id="lc" style="left:964.00px;top:467px;font-size:16.8px;color:#4a4a4a;letter-spacing:-0.021px;">Columns</div>
<div class="a" style="left:932.2px;top:492px;width:128.7px;height:71.8px;background:#fff;"></div>
<div class="dd" style="left:934px;top:495px;width:125px;height:31px;"></div>
<div class="t" id="dy" style="left:945.90px;top:504px;font-size:14.9px;color:#4a4a4a;letter-spacing:-0.196px;">Years</div>
<svg style="left:1032.6px;top:507.7px" width="12" height="6.6"><path d="M0 0H12L6 6.6Z" fill="#333"/></svg>
<svg style="left:806.6px;top:587.8px" width="13" height="10.2" fill="#a2a2a2"><rect y="0" width="13" height="2.6" fill="#8a8a8a"/><rect y="3.8" width="13" height="1.2"/><rect y="6.3" width="13" height="1.2"/><rect y="8.8" width="13" height="1.2"/></svg>
<div class="t" id="lr" style="left:831.30px;top:589px;font-size:16.8px;color:#4a4a4a;letter-spacing:-0.457px;">Rows</div>
<div class="a" style="left:800px;top:615px;width:121.6px;height:73px;background:#fff;"></div>
<div class="dd" style="left:801.4px;top:617.3px;width:118.2px;height:31px;"></div>
<div class="t" id="ds" style="left:812.90px;top:626px;font-size:14.9px;color:#4a4a4a;letter-spacing:0.239px;">Shipped</div>
<svg style="left:892.8px;top:630.2px" width="12" height="6.6"><path d="M0 0H12L6 6.6Z" fill="#333"/></svg>
<div class="t" id="sig" style="left:940.20px;top:585px;font-size:17.5px;color:#858585;font-family:'Liberation Serif',serif;">Σ</div>
<div class="t" id="lv" style="left:964.50px;top:589px;font-size:16.8px;color:#4a4a4a;letter-spacing:-0.215px;">Values</div>
<div class="a" style="left:932.2px;top:615px;width:128.7px;height:73px;background:#fff;"></div>
<div class="dd" style="left:934px;top:617.3px;width:125px;height:31px;"></div>
<div class="t" id="dv" style="left:945.30px;top:626px;font-size:14.9px;color:#4a4a4a;letter-spacing:-0.102px;">Sum of A...</div>
<svg style="left:1032.6px;top:630.2px" width="12" height="6.6"><path d="M0 0H12L6 6.6Z" fill="#333"/></svg>
<div class="a" style="left:802.2px;top:725.8px;width:18.9px;height:18.7px;box-sizing:border-box;border:1.2px solid #8c8c8c;background:#fff;"></div>
<div class="t" id="defer" style="left:829.30px;top:730px;font-size:16.8px;color:#4a4a4a;letter-spacing:-0.025px;">Defer Layout Upd...</div>
<div class="a" style="left:994px;top:717.3px;width:65.7px;height:33px;background:#fbfbfb;"></div>
<div class="t" id="upd" style="left:999.30px;top:728px;font-size:16.8px;color:#b8b8b8;letter-spacing:0.164px;">Update</div>
<svg style="left:0;top:0" width="1110" height="769" fill="none" stroke="#c9202f" stroke-width="2.7"><ellipse cx="857.6" cy="292.1" rx="87.5" ry="22.9" transform="rotate(-1 857.6 292.1)"/><path d="M874.5 315L962.5 591" stroke-width="2.4"/></svg>
</body></html>
